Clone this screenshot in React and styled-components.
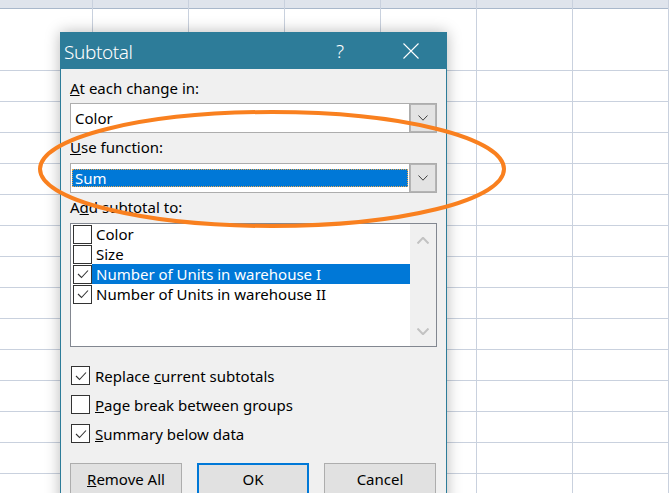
import React from 'react';
import styled, { createGlobalStyle } from 'styled-components';

const GlobalStyle = createGlobalStyle`
    html, body {
        margin : 0;
        padding : 0;
        overflow : hidden;
        background : #ffffff;
    }
    body {
        font-family : "Noto Sans", "Open Sans", sans-serif;
    }
`;

const Page = styled.div`
    position : relative;
    width : 669px;
    height : 493px;
    overflow : hidden;
    background : #ffffff;
`;

// spreadsheet behind the dialog, the 1px gaps are the grid lines
const Sheet = styled.div`
    display : grid;
    grid-template-columns : 92px repeat(7, 95px);
    grid-template-rows : 8px 61px repeat(14, 30px);
    gap : 1px;
    background : #c9d1de;
`;
const Cell = styled.div`
    background : ${p => p.$head ? '#dfe4ec' : '#ffffff'};
    box-shadow : ${p => p.$head ? '0 1px 0 #a9b8cb' : 'none'};
`;

const Dialog = styled.div`
    position : absolute;
    left : 60px;
    top : 32px;
    width : 387px;
    height : 520px;
    box-sizing : border-box;
    border : 1px solid #2d7c99;
    background : #f0f0f0;
    box-shadow : 0 0 14px rgba(0, 0, 0, 0.28);
    color : #000000;
`;
const TitleBar = styled.div`
    display : flex;
    align-items : center;
    height : 36px;
    padding : 0 12px 0 3px;
    background : #2d7c99;
    color : #ffffff;
`;
const Title = styled.div`
    flex : 1;
    font-size : 19px;
    font-weight : 300;
    letter-spacing : -0.4px;
    padding-top : 1px;
`;
const TitleButton = styled.div`
    display : flex;
    align-items : center;
    justify-content : center;
    width : ${p => p.$w}px;
    margin-left : ${p => p.$ml || 0}px;
    height : 36px;
    font-size : 19px;
    font-weight : 300;
`;

const Body = styled.div`
    display : flex;
    flex-direction : column;
    padding : 9px 9px 0 9px;
    font-size : 15px;
`;
const Label = styled.div`
    height : 20px;
    line-height : 20px;
    margin : ${p => p.$mt || 0}px 0 ${p => p.$mb || 0}px;
`;

const Combo = styled.div`
    display : flex;
    height : 30px;
    box-sizing : border-box;
    border : 1px solid #adadad;
    background : #ffffff;
`;
const ComboValue = styled.div`
    flex : 1;
    padding : 5px 1px;
`;
const ComboText = styled.div`
    height : 18px;
    line-height : 18px;
    padding-left : 3px;
    box-sizing : border-box;
    background : ${p => p.$selected ? '#0078d7' : 'transparent'};
    color : ${p => p.$selected ? '#ffffff' : '#000000'};
    outline : ${p => p.$selected ? '1px dotted #e8a64f' : 'none'};
    outline-offset : -1px;
`;
const ComboButton = styled.div`
    display : flex;
    align-items : center;
    justify-content : center;
    width : 26px;
    background : #e3e3e3;
    box-shadow : inset 0 0 0 1px #b4b4b4;
    border-left : 1px solid #adadad;
`;

const ListBox = styled.div`
    display : flex;
    height : 124px;
    box-sizing : border-box;
    border : 1px solid #828790;
    background : #ffffff;
`;
const ListItems = styled.div`
    flex : 1;
    padding-left : 2px;
`;
const ListRow = styled.div`
    display : flex;
    align-items : center;
    height : 20px;
`;
const ItemText = styled.div`
    flex : 1;
    height : 20px;
    line-height : 20px;
    padding-left : 4px;
    background : ${p => p.$selected ? '#0078d7' : 'transparent'};
    color : ${p => p.$selected ? '#ffffff' : '#000000'};
`;
const ScrollBar = styled.div`
    display : flex;
    flex-direction : column;
    align-items : center;
    justify-content : space-between;
    width : 26px;
    padding : 13px 0 11px;
    background : #f0f0f0;
`;

const Box = styled.div`
    display : flex;
    align-items : center;
    justify-content : center;
    flex : none;
    width : ${p => p.$size}px;
    height : ${p => p.$size}px;
    box-sizing : border-box;
    border : 1px solid #333333;
    background : #ffffff;
`;

const Options = styled.div`
    display : flex;
    flex-direction : column;
    gap : 10px;
    margin-top : 19px;
    padding-left : 1px;
`;
const Option = styled.div`
    display : flex;
    align-items : center;
    gap : 5px;
    height : 19px;
`;

const Buttons = styled.div`
    display : flex;
    gap : 15px;
    margin-top : 20px;
`;
const Button = styled.div`
    display : flex;
    align-items : center;
    justify-content : center;
    width : 112px;
    height : 32px;
    box-sizing : border-box;
    background : #e1e1e1;
    border : ${p => p.$primary ? '2px solid #0078d7' : '1px solid #adadad'};
`;

const Overlay = styled.svg`
    position : absolute;
    left : 0;
    top : 0;
    pointer-events : none;
`;

const Chevron = ({ up, color = '#404040', w = 10, h = 6, sw = 1 }) => (
    <svg width={w} height={h} viewBox={`0 0 ${w} ${h}`}>
        <polyline
            points={up ? `0.5,${h - 0.5} ${w / 2},0.8 ${w - 0.5},${h - 0.5}` : `0.5,0.5 ${w / 2},${h - 0.8} ${w - 0.5},0.5`}
            fill="none" stroke={color} strokeWidth={sw} />
    </svg>
);

const Check = () => (
    <svg width="12" height="10" viewBox="0 0 12 10">
        <polyline points="1,5 4.5,8.5 11,1.5" fill="none" stroke="#333333" strokeWidth="1.1" />
    </svg>
);

function CheckBox({ checked, size = 19 }) {
    return <Box $size={size}>{checked && <Check />}</Box>;
}

const fields = [
    { name : 'Color', checked : false },
    { name : 'Size', checked : false },
    { name : 'Number of Units in warehouse I', checked : true, selected : true },
    { name : 'Number of Units in warehouse II', checked : true },
];

function App() {
    const cells = [];
    for (let r = 0; r < 16; r++) {
        for (let c = 0; c < 8; c++) {
            cells.push(<Cell key={r + '-' + c} $head={r === 0} />);
        }
    }

    return (
        <Page>
            <GlobalStyle />
            <Sheet>{cells}</Sheet>

            <Dialog>
                <TitleBar>
                    <Title>Subtotal</Title>
                    <TitleButton $w={40}>?</TitleButton>
                    <TitleButton $w={46} $ml={28}>
                        <svg width="16" height="16" viewBox="0 0 16 16">
                            <path d="M0.5 0.5 L15.5 15.5 M15.5 0.5 L0.5 15.5" stroke="#ffffff" strokeWidth="1.1" />
                        </svg>
                    </TitleButton>
                </TitleBar>

                <Body>
                    <Label $mb={5}><u>A</u>t each change in:</Label>
                    <Combo>
                        <ComboValue><ComboText>Color</ComboText></ComboValue>
                        <ComboButton><Chevron /></ComboButton>
                    </Combo>

                    <Label $mt={4} $mb={6}><u>U</u>se function:</Label>
                    <Combo>
                        <ComboValue><ComboText $selected>Sum</ComboText></ComboValue>
                        <ComboButton><Chevron /></ComboButton>
                    </Combo>

                    <Label $mt={4} $mb={6}>A<u>d</u>d subtotal to:</Label>
                    <ListBox>
                        <ListItems>
                            {fields.map(f => (
                                <ListRow key={f.name}>
                                    <CheckBox checked={f.checked} />
                                    <ItemText $selected={f.selected}>{f.name}</ItemText>
                                </ListRow>
                            ))}
                        </ListItems>
                        <ScrollBar>
                            <Chevron up color="#c2c2c2" w={12} h={7} sw={2} />
                            <Chevron color="#c2c2c2" w={12} h={7} sw={2} />
                        </ScrollBar>
                    </ListBox>

                    <Options>
                        <Option><CheckBox checked /><span>Replace <u>c</u>urrent subtotals</span></Option>
                        <Option><CheckBox /><span><u>P</u>age break between groups</span></Option>
                        <Option><CheckBox checked /><span><u>S</u>ummary below data</span></Option>
                    </Options>

                    <Buttons>
                        <Button><span><u>R</u>emove All</span></Button>
                        <Button $primary>OK</Button>
                        <Button>Cancel</Button>
                    </Buttons>
                </Body>
            </Dialog>

            <Overlay width="669" height="493" viewBox="0 0 669 493">
                <ellipse cx="272" cy="169" rx="232" ry="57" fill="none" stroke="#f9801f" strokeWidth="4" />
            </Overlay>
        </Page>
    );
}

export default App;
